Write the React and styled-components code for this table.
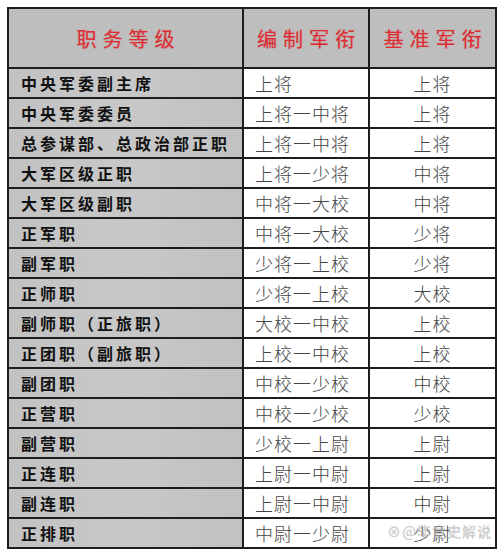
import React from 'react';
import styled, { createGlobalStyle } from 'styled-components';

const GlobalStyle = createGlobalStyle`
    html, body {
        margin: 0;
        padding: 0;
        background: #ffffff;
    }
`

const Page = styled.div`
    position: relative;
    width: 500px;
    height: 553px;
    padding: 7px 0 0 7px;
    box-sizing: border-box;
    font-family: "Noto Sans CJK SC", "Noto Sans", sans-serif;
`

const Table = styled.table`
    border-collapse: collapse;
    table-layout: fixed;
    width: 488px;
    border: 2px solid #1e1e1e;
`

const HeadCell = styled.th`
    height: 58px;
    padding: 0;
    background: #bebebe;
    border: 2px solid #1e1e1e;
    color: #dc2f35;
    font-size: 20px;
    font-weight: 400;
    letter-spacing: 6px;
    text-align: center;
    text-indent: 6px;
    text-shadow: 0 0 1px rgba(220, 47, 53, 0.5);
`

const Cell = styled.td`
    height: 28px;
    padding: 0;
    border: 2px solid #1e1e1e;
    overflow: hidden;
    white-space: nowrap;
`

const PostCell = styled(Cell)`
    padding-left: 12px;
    background: linear-gradient(90deg, #c2c2c2, #c8c8c8 50%, #c1c1c1);
    color: #111111;
    font-size: 16px;
    font-weight: 700;
    letter-spacing: 3px;
`

const RankCell = styled(Cell)`
    padding-left: ${p => (p.$center ? '0' : '11px')};
    text-align: ${p => (p.$center ? 'center' : 'left')};
    background: #ffffff;
    color: #444444;
    font-size: 18px;
    font-weight: 300;
    letter-spacing: 1px;
`

const Watermark = styled.div`
    position: absolute;
    right: 8px;
    bottom: 12px;
    color: rgba(160, 160, 160, 0.5);
    font-size: 14px;
    font-weight: 700;
    letter-spacing: 1px;
    pointer-events: none;
`

const rows = [
    ['中央军委副主席', '上将', '上将'],
    ['中央军委委员', '上将一中将', '上将'],
    ['总参谋部、总政治部正职', '上将一中将', '上将'],
    ['大军区级正职', '上将一少将', '中将'],
    ['大军区级副职', '中将一大校', '中将'],
    ['正军职', '中将一大校', '少将'],
    ['副军职', '少将一上校', '少将'],
    ['正师职', '少将一上校', '大校'],
    ['副师职（正旅职）', '大校一中校', '上校'],
    ['正团职（副旅职）', '上校一中校', '上校'],
    ['副团职', '中校一少校', '中校'],
    ['正营职', '中校一少校', '少校'],
    ['副营职', '少校一上尉', '上尉'],
    ['正连职', '上尉一中尉', '上尉'],
    ['副连职', '上尉一中尉', '中尉'],
    ['正排职', '中尉一少尉', '少尉'],
]

function App() {
    return (
        <Page>
            <GlobalStyle />
            <Table>
                <colgroup>
                    <col style={{ width: 235 }} />
                    <col style={{ width: 126 }} />
                    <col style={{ width: 127 }} />
                </colgroup>
                <thead>
                    <tr>
                        <HeadCell>职务等级</HeadCell>
                        <HeadCell>编制军衔</HeadCell>
                        <HeadCell>基准军衔</HeadCell>
                    </tr>
                </thead>
                <tbody>
                    {rows.map(([post, range, base]) => (
                        <tr key={post}>
                            <PostCell>{post}</PostCell>
                            <RankCell>{range}</RankCell>
                            <RankCell $center>{base}</RankCell>
                        </tr>
                    ))}
                </tbody>
            </Table>
            <Watermark>⊗@毕竟史解说</Watermark>
        </Page>
    )
}

export default App;
